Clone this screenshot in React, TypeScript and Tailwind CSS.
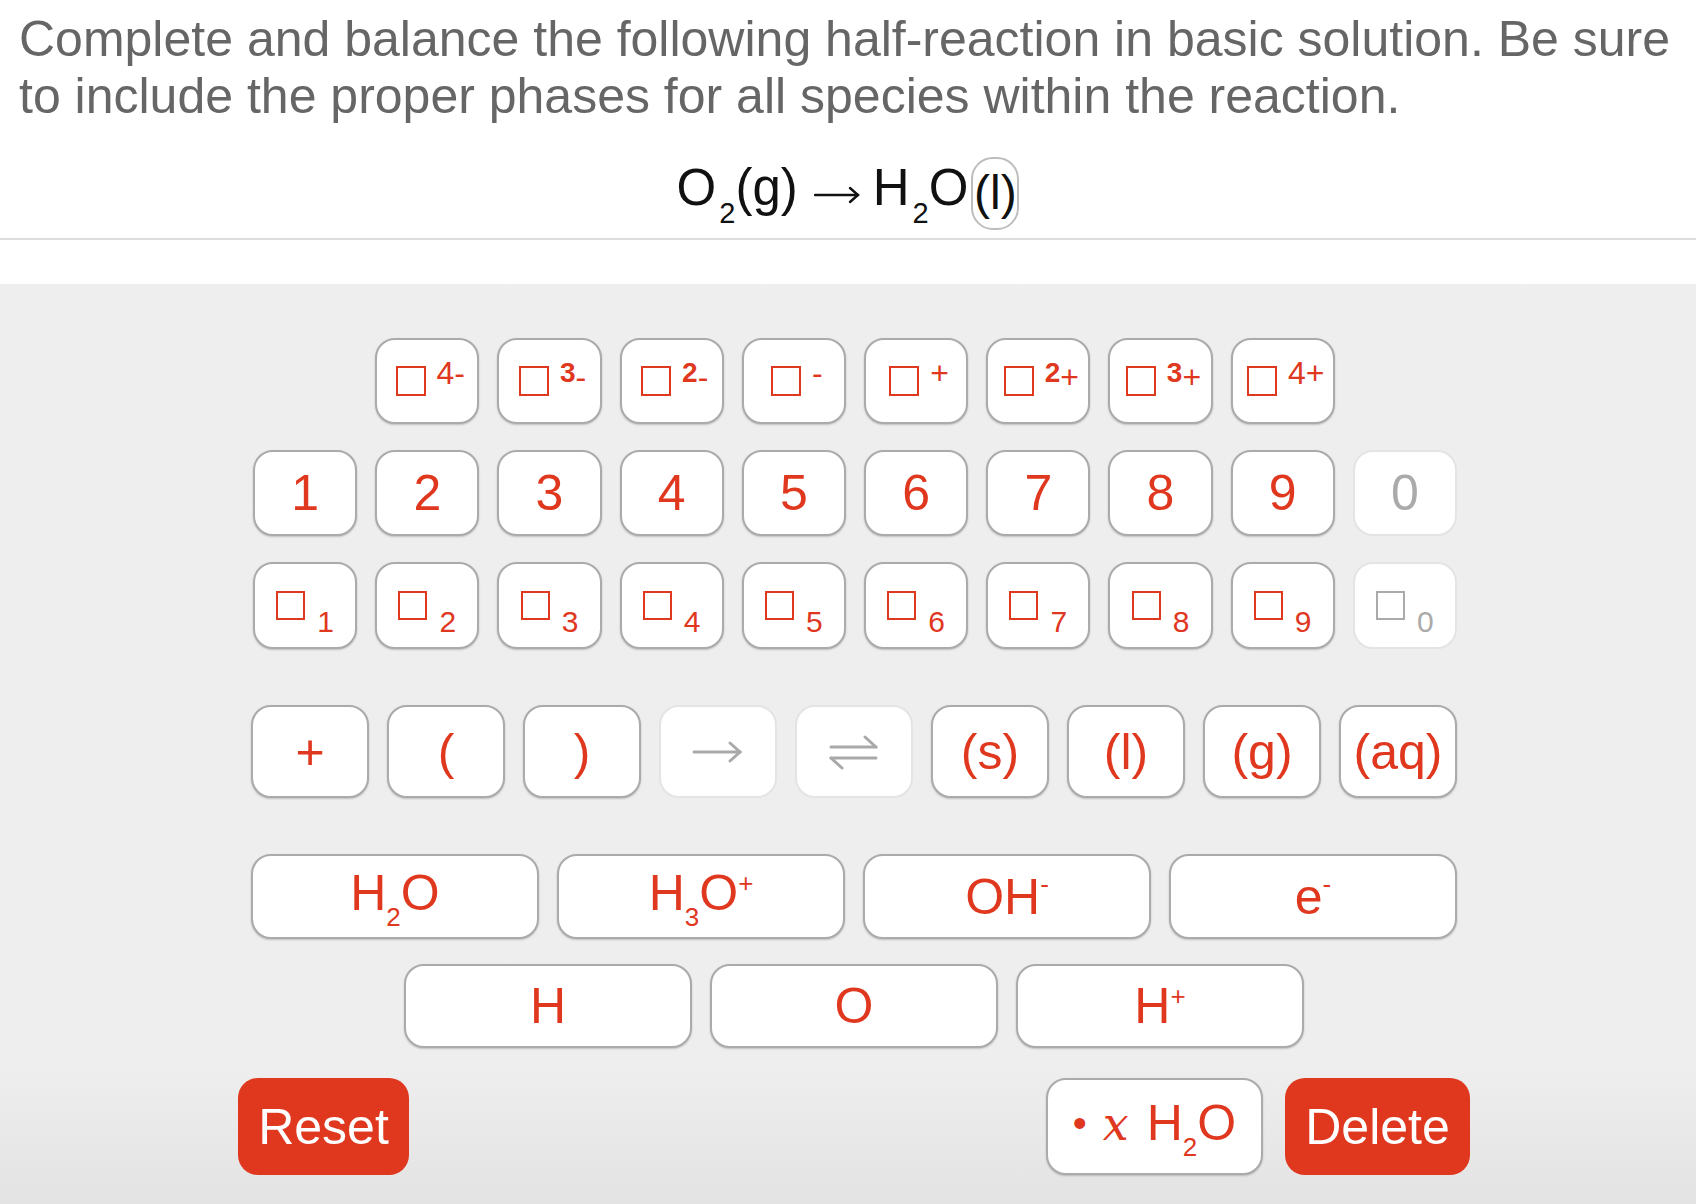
import React from 'react'

type KeyProps = {
  children?: React.ReactNode
  disabled?: boolean
  className?: string
}

function Key({ children, disabled, className }: KeyProps) {
  return (
    <button
      type="button"
      className={`flex items-center justify-center rounded-[20px] bg-white ${
        disabled
          ? 'border-2 border-[#e4e4e4] text-[#aaaaaa]'
          : 'border-2 border-[#ababab] text-[#e0371f] shadow-[0_1px_2px_rgba(0,0,0,0.2)]'
      } ${className ?? ''}`}
    >
      {children}
    </button>
  )
}

// charge key: empty box with a superscript charge
function Charge({ num, sign, bold }: { num?: string; sign: string; bold?: boolean }) {
  return (
    <span className="inline-flex items-start ml-[6px]">
      <span className="block w-[30px] h-[30px] border-2 border-current" />
      <span className="ml-[11px] -mt-[9px] text-[32px] leading-[32px] whitespace-nowrap">
        {num && (
          <span className={bold ? 'font-bold text-[28px] align-[6px]' : ''}>{num}</span>
        )}
        {sign}
      </span>
    </span>
  )
}

// subscript key: empty box with a subscript number
function Sub({ n }: { n: string }) {
  return (
    <span className="inline-flex items-end">
      <span className="block w-[29px] h-[29px] border-2 border-current" />
      <span className="ml-[12px] -mb-[17px] text-[30px] leading-[30px]">{n}</span>
    </span>
  )
}

function ArrowIcon() {
  return (
    <svg width="52" height="30" viewBox="0 0 52 30" fill="none" stroke="#a9a9a9" strokeWidth="3" strokeLinecap="round">
      <line x1="2" y1="15" x2="48" y2="15" />
      <polyline points="38,6 48,15 38,24" />
    </svg>
  )
}

function EquilibriumIcon() {
  return (
    <svg width="52" height="38" viewBox="0 0 52 38" fill="none" stroke="#a9a9a9" strokeWidth="3" strokeLinecap="round">
      <line x1="3" y1="14" x2="48" y2="14" />
      <line x1="48" y1="14" x2="37" y2="4" />
      <line x1="3" y1="25" x2="48" y2="25" />
      <line x1="3" y1="25" x2="14" y2="35" />
    </svg>
  )
}

function ReactionArrow() {
  return (
    <svg width="46" height="20" viewBox="0 0 46 20" fill="none" stroke="#111111" strokeWidth="2.4" strokeLinecap="round">
      <line x1="1" y1="10" x2="44" y2="10" />
      <polyline points="36,3 44,10 36,17" />
    </svg>
  )
}

const charges = [
  { num: '4', sign: '-' },
  { num: '3', sign: '-', bold: true },
  { num: '2', sign: '-', bold: true },
  { num: '', sign: '-' },
  { num: '', sign: '+' },
  { num: '2', sign: '+', bold: true },
  { num: '3', sign: '+', bold: true },
  { num: '4', sign: '+' },
]

const digits = ['1', '2', '3', '4', '5', '6', '7', '8', '9']

export default function App() {
  return (
    <div
      className="w-[1696px] h-[1204px] overflow-hidden bg-white flex flex-col"
      style={{ fontFamily: '"Liberation Sans", Arial, Helvetica, sans-serif' }}
    >
      {/* question */}
      <div className="pt-[11px] px-[19px] text-[50px] leading-[57px] text-[#666666]">
        Complete and balance the following half-reaction in basic solution. Be sure to include the proper phases for
        all species within the reaction.
      </div>

      {/* equation */}
      <div className="h-[115px] pt-[23px] flex items-center justify-center border-b-2 border-[#dddddd] text-[51px] leading-[60px] text-[#111111]">
        <span>
          O<span className="ml-[3px] text-[29px] leading-none align-[-18px]">2</span>(g)
        </span>
        <span className="ml-[16px] mr-[13px] mt-[4px]">
          <ReactionArrow />
        </span>
        <span>
          H<span className="ml-[3px] text-[29px] leading-none align-[-18px]">2</span>O
        </span>
        <span className="ml-[3px] inline-flex items-center justify-center h-[73px] w-[48px] rounded-[22px] border-2 border-[#bdbdbd] text-[48px]">
          (l)
        </span>
      </div>

      <div className="h-[44px] bg-white" />

      {/* keypad panel */}
      <div className="flex-1 pt-[54px] bg-linear-to-b from-[#eeeeee] from-85% to-[#e3e3e3]">
        <div className="ml-[238px] w-[1232px]">
          <div className="mx-auto w-[1206px]">
            {/* charges */}
            <div className="ml-[2px] grid grid-cols-10 gap-x-[18px] h-[86px]">
              {charges.map((c, i) => (
                <Key key={i} className={i === 0 ? 'col-start-2' : ''}>
                  <Charge num={c.num} sign={c.sign} bold={c.bold} />
                </Key>
              ))}
            </div>

            {/* digits */}
            <div className="ml-[2px] mt-[26px] grid grid-cols-10 gap-x-[18px] h-[86px] text-[50px] leading-none">
              {digits.map((d) => (
                <Key key={d}>{d}</Key>
              ))}
              <Key disabled>0</Key>
            </div>

            {/* subscripts */}
            <div className="ml-[2px] mt-[26px] grid grid-cols-10 gap-x-[18px] h-[87px]">
              {digits.map((d) => (
                <Key key={d}>
                  <Sub n={d} />
                </Key>
              ))}
              <Key disabled>
                <Sub n="0" />
              </Key>
            </div>

            {/* symbols and phases */}
            <div className="mt-[56px] grid grid-cols-9 gap-x-[18px] h-[93px] text-[50px] leading-none">
              <Key>+</Key>
              <Key>(</Key>
              <Key>)</Key>
              <Key disabled>
                <ArrowIcon />
              </Key>
              <Key disabled>
                <EquilibriumIcon />
              </Key>
              <Key>(s)</Key>
              <Key>(l)</Key>
              <Key>(g)</Key>
              <Key>(aq)</Key>
            </div>

            {/* species */}
            <div className="mt-[56px] grid grid-cols-4 gap-x-[18px] h-[85px] text-[50px] leading-[60px]">
              <Key>
                <span>
                  H<span className="text-[26px] leading-none align-[-16px]">2</span>O
                </span>
              </Key>
              <Key>
                <span>
                  H<span className="text-[26px] leading-none align-[-16px]">3</span>O
                  <span className="text-[26px] leading-none align-[18px]">+</span>
                </span>
              </Key>
              <Key>
                <span>
                  OH<span className="text-[26px] leading-none align-[21px]">-</span>
                </span>
              </Key>
              <Key>
                <span>
                  e<span className="text-[26px] leading-none align-[21px]">-</span>
                </span>
              </Key>
            </div>

            <div className="mt-[25px] flex justify-center gap-x-[18px] h-[84px] text-[50px] leading-[60px]">
              <Key className="w-[288px]">H</Key>
              <Key className="w-[288px]">O</Key>
              <Key className="w-[288px]">
                <span>
                  H<span className="text-[26px] leading-none align-[18px]">+</span>
                </span>
              </Key>
            </div>
          </div>

          {/* actions */}
          <div className="mt-[30px] flex h-[97px]">
            <button
              type="button"
              className="w-[171px] rounded-[20px] bg-[#e0371f] text-white text-[50px] leading-none"
            >
              Reset
            </button>
            <Key className="ml-auto w-[217px] text-[50px] leading-[60px]">
              <span className="whitespace-nowrap">
                <span className="text-[40px] align-[3px]">•</span>
                <span
                  className="ml-[16px] italic text-[46px]"
                  style={{ fontFamily: '"DejaVu Serif", "Liberation Serif", serif' }}
                >
                  x
                </span>
                <span className="ml-[18px]">H</span>
                <span className="text-[26px] leading-none align-[-16px]">2</span>O
              </span>
            </Key>
            <button
              type="button"
              className="ml-[22px] w-[185px] rounded-[20px] bg-[#e0371f] text-white text-[50px] leading-none"
            >
              Delete
            </button>
          </div>
        </div>
      </div>
    </div>
  )
}
